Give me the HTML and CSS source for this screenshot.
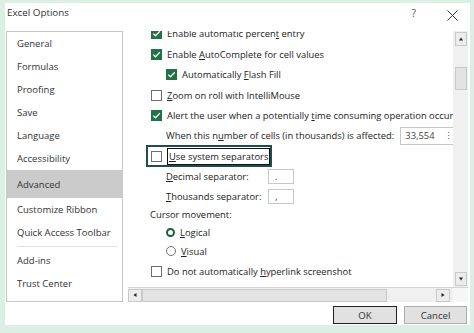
FILE: index.html
```html
<!DOCTYPE html>
<html lang="en">
<head>
    <meta charset="UTF-8">
    <meta name="viewport" content="width=device-width, initial-scale=1.0">
    <title>Excel Options</title>
    <link rel="stylesheet" href="styles.css">
</head>
<body>

    <div class="window">
        <div class="titlebar">
            <span class="title">Excel Options</span>
            <span class="help">?</span>
            <span class="close">
                <svg width="11" height="11" viewBox="0 0 11 11"><path d="M0.5 0.5 L10.5 10.5 M10.5 0.5 L0.5 10.5" stroke="#333" stroke-width="1"/></svg>
            </span>
        </div>

        <div class="main">
            <ul class="nav">
                <li>General</li>
                <li>Formulas</li>
                <li>Proofing</li>
                <li>Save</li>
                <li>Language</li>
                <li>Accessibility</li>
                <li class="active">Advanced</li>
                <li>Customize Ribbon</li>
                <li class="last-group">Quick Access Toolbar</li>
                <li class="sep"></li>
                <li class="after-sep">Add-ins</li>
                <li>Trust Center</li>
            </ul>

            <div class="pane">
                <div class="pane-top">
                    <div class="viewport">
                        <div class="content">
                            <div class="row h22"><span class="cb checked"></span><span>Enable automatic percen<u>t</u> entry</span></div>
                            <div class="row"><span class="cb checked"></span><span>Enable <u>A</u>utoComplete for cell values</span></div>
                            <div class="row h21 indent"><span class="cb checked"></span><span>Automatically <u>F</u>lash Fill</span></div>
                            <div class="row"><span class="cb"></span><span><u>Z</u>oom on roll with IntelliMouse</span></div>
                            <div class="row"><span class="cb checked"></span><span>Alert the user when a potentially <u>t</u>ime consuming operation occurs</span></div>
                            <div class="row h21 indent">
                                <span class="affected">When this n<u>u</u>mber of cells (in thousands) is affected:</span>
                                <span class="numbox">33,554<span class="spin">&#8942;</span></span>
                            </div>
                            <div class="row callout-row">
                                <span class="callout"><span class="cb"></span><span class="focus"><u>U</u>se system separators</span></span>
                            </div>
                            <div class="row h21 indent">
                                <span class="sep-label"><u>D</u>ecimal separator:</span><span class="charbox">.</span>
                            </div>
                            <div class="row h19 indent">
                                <span class="sep-label"><u>T</u>housands separator:</span><span class="charbox">,</span>
                            </div>
                            <div class="row h17 group-label">Cursor movement:</div>
                            <div class="row h18 indent"><span class="radio on"></span><span><u>L</u>ogical</span></div>
                            <div class="row indent"><span class="radio"></span><span><u>V</u>isual</span></div>
                            <div class="row"><span class="cb"></span><span>Do not automatically <u>h</u>yperlink screenshot</span></div>
                        </div>
                    </div>
                    <div class="vscroll">
                        <span class="sbtn up"></span>
                        <span class="vthumb"></span>
                        <span class="vtrack"></span>
                        <span class="sbtn down"></span>
                    </div>
                </div>
                <div class="hscroll">
                    <span class="sbtn left"></span>
                    <span class="hthumb"></span>
                    <span class="htrack"></span>
                    <span class="sbtn right"></span>
                    <span class="corner"></span>
                </div>
            </div>
        </div>

        <div class="footer">
            <button type="button" class="btn default">OK</button>
            <button type="button" class="btn">Cancel</button>
        </div>
    </div>

</body>
</html>
```

FILE: styles.css
```css
body {
    margin: 0;
    background-color: #dcefe5;
    font-family: 'Open Sans', sans-serif;
    font-size: 9.4px;
    color: #222;
}

.window {
    margin: 3px 4px 8px 5px;
    height: 322px;
    background-color: #fff;
    display: flex;
    flex-direction: column;
}

/* title bar */
.titlebar {
    height: 28px;
    display: flex;
    align-items: flex-start;
    padding-top: 3px;
    box-sizing: border-box;
}

.title {
    padding-left: 2px;
    font-size: 9.8px;
    color: #333;
}

.help {
    margin-left: auto;
    margin-right: 31px;
    font-size: 10.5px;
    color: #555;
}

.close {
    margin-right: 12px;
    padding-top: 4px;
}

/* body */
.main {
    display: flex;
    height: 271px;
}

.nav {
    list-style: none;
    margin: 0 0 0 1px;
    padding: 0;
    width: 115px;
    border: 1px solid #c6c6c6;
    height: 269px;
}

.nav li {
    height: 23px;
    line-height: 23px;
    padding-left: 10px;
    color: #333;
    font-size: 9.5px;
}

.nav li.active {
    height: 28px;
    line-height: 29px;
    background-color: #cbcbcb;
}

.nav li.last-group {
    height: 25px;
}

.nav li.sep {
    height: 1px;
    background-color: #e2e2e2;
    margin: 0 4px 0 10px;
    padding: 0;
}

.nav li.after-sep {
    margin-top: 2px;
}

.pane {
    margin-left: 5px;
    width: 340px;
    display: flex;
    flex-direction: column;
}

.pane-top {
    display: flex;
    height: 256px;
}

.viewport {
    width: 325px;
    overflow: hidden;
}

/* content scrolled part way down */
.content {
    margin-top: -9px;
}

.row {
    height: 20px;
    display: flex;
    align-items: center;
    padding-left: 23px;
    white-space: nowrap;
}

.row.h22 { height: 22px; }
.row.h21 { height: 21px; }
.row.h19 { height: 19px; }
.row.h18 { height: 18px; }
.row.h17 { height: 17px; }

.row.indent {
    padding-left: 38px;
}

.row.group-label {
    padding-left: 22px;
}

.cb {
    width: 9px;
    height: 9px;
    border: 1px solid #6f6f6f;
    background-color: #fff;
    margin-right: 5px;
    flex-shrink: 0;
}

.cb.checked {
    width: 11px;
    height: 11px;
    border: none;
    background-color: #217346;
    background-image: url("data:image/svg+xml,%3Csvg xmlns='http://www.w3.org/2000/svg' width='11' height='11'%3E%3Cpath d='M2.3 5.6 L4.5 7.8 L8.8 3.3' fill='none' stroke='white' stroke-width='1.3'/%3E%3C/svg%3E");
}

.radio {
    width: 8px;
    height: 8px;
    border: 1px solid #6f6f6f;
    border-radius: 50%;
    margin-right: 5px;
    flex-shrink: 0;
}

.radio.on {
    width: 5px;
    height: 5px;
    border: 2.5px solid #1d5e3b;
}

.numbox {
    margin-left: 6px;
    height: 16px;
    width: 60px;
    border: 1px solid #c8c8c8;
    display: flex;
    align-items: center;
    padding-left: 4px;
    flex-shrink: 0;
    color: #444;
}

.spin {
    margin-left: 9px;
    font-size: 9px;
    color: #666;
}

.callout-row {
    padding-left: 18px;
}

.callout {
    display: flex;
    align-items: center;
    height: 18px;
    border: 2px solid #1f4e4d;
    padding-left: 3px;
}

.focus {
    border: 1px solid #111;
    height: 15px;
    line-height: 15px;
    padding: 0 1px;
}

.sep-label {
    width: 102px;
}

.charbox {
    width: 26px;
    height: 15px;
    border: 1px solid #c8c8c8;
    padding-left: 6px;
    box-sizing: border-box;
    line-height: 13px;
}

/* scrollbars */
.vscroll {
    width: 15px;
    background-color: #f0f0f0;
    display: flex;
    flex-direction: column;
    align-items: center;
    padding-top: 1px;
}

.sbtn {
    display: block;
    width: 12px;
    height: 14px;
    background-color: #ececec;
    border: 1px solid #c9c9c9;
    box-sizing: border-box;
    position: relative;
}

.sbtn::after {
    content: "";
    position: absolute;
    left: 50%;
    top: 50%;
    border: 2.5px solid transparent;
    transform: translate(-50%, -50%);
}

.sbtn.up::after { border-bottom: 3px solid #222; margin-top: -1px; }
.sbtn.down::after { border-top: 3px solid #222; margin-top: 1px; }
.sbtn.left::after { border-right: 3px solid #222; margin-left: -1px; }
.sbtn.right::after { border-left: 3px solid #222; margin-left: 1px; }

.vthumb {
    width: 12px;
    height: 23px;
    margin-top: 21px;
    background-color: #e3e3e3;
    border: 1px solid #c9c9c9;
    box-sizing: border-box;
}

.vtrack {
    flex: 1;
}

.sbtn.down {
    margin-bottom: 1px;
}

.hscroll {
    height: 15px;
    display: flex;
    align-items: center;
    background-color: #f0f0f0;
    border-top: 1px solid #d4d4d4;
    box-sizing: border-box;
}

.sbtn.left,
.sbtn.right {
    width: 14px;
    height: 13px;
}

.hthumb {
    width: 246px;
    height: 13px;
    background-color: #e3e3e3;
    border: 1px solid #c9c9c9;
    box-sizing: border-box;
}

.htrack {
    width: 49px;
}

.corner {
    margin-left: 3px;
    width: 15px;
    height: 14px;
    background-color: #f6f6f6;
}

/* buttons */
.footer {
    height: 23px;
    display: flex;
    justify-content: flex-end;
    align-items: flex-start;
    padding-top: 4px;
    padding-right: 3px;
    gap: 7px;
    box-sizing: border-box;
}

.btn {
    width: 63px;
    height: 18px;
    background-color: #e1e1e1;
    border: 1px solid #adadad;
    font-family: 'Open Sans', sans-serif;
    font-size: 9.6px;
    color: #333;
    padding: 0;
}

.btn.default {
    width: 64px;
    border: 1px solid #222;
}
```
